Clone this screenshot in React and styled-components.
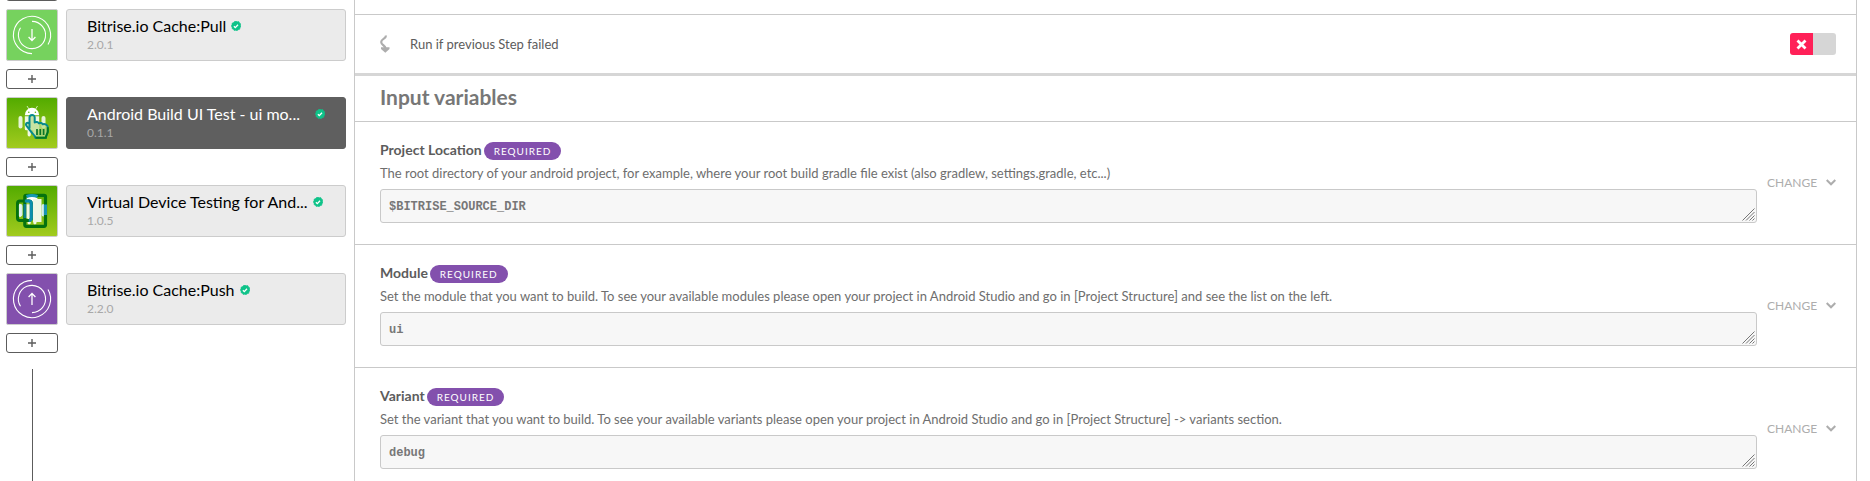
import { useState } from "react";
import styled, { createGlobalStyle } from "styled-components";

const GlobalStyle = createGlobalStyle`
  * {
    box-sizing: border-box;
  }
  body {
    margin: 0;
    background: #fff;
    color: #5c5c5c;
    font-family: Lato, "Liberation Sans", sans-serif;
    font-size: 13px;
  }
  button, textarea {
    font-family: inherit;
    margin: 0;
  }
`;

const Page = styled.div`
  display: flex;
  height: 100vh;
  overflow: hidden;
`;

/* workflow steps */

const Sidebar = styled.aside`
  flex: 0 0 354px;
  min-width: 0;
  display: flex;
  flex-direction: column;
  padding: 0 8px 0 6px;
`;

/* the list is scrolled, its first add button is almost out of view */
const StepList = styled.ol`
  list-style: none;
  margin: -19px 0 0;
  padding: 0;
  display: flex;
  flex-direction: column;
  gap: 8px;
`;

const StepItem = styled.li`
  display: flex;
  gap: 8px;
`;

const AddButton = styled.button`
  width: 52px;
  height: 20px;
  padding: 0;
  display: flex;
  justify-content: center;
  align-items: center;
  color: #5c5c5c;
  background: #fff;
  border: 1px solid #5c5c5c;
  border-radius: 3px;
  cursor: pointer;
`;

const StepIcon = styled.div`
  flex: none;
  width: 52px;
  height: 52px;
  border: 1px solid #ccc;
  border-radius: 2px;
  overflow: hidden;
  background: ${(props) => props.$bg};

  svg {
    display: block;
  }
`;

const StepCard = styled.button`
  flex: 1;
  min-width: 0;
  height: 52px;
  padding: 6px 20px;
  text-align: left;
  color: ${(props) => (props.$active ? "#fff" : "#000")};
  background: ${(props) => (props.$active ? "#5f5f5f" : "#ebebeb")};
  border: 1px solid ${(props) => (props.$active ? "#5f5f5f" : "#ccc")};
  border-radius: 3px;
  cursor: pointer;
`;

const StepTitle = styled.div`
  display: flex;
  align-items: center;
  justify-content: ${(props) => (props.$active ? "space-between" : "flex-start")};
  gap: 5px;
  font-size: 16px;
  line-height: 20px;

  svg {
    flex: none;
  }
`;

const StepName = styled.span`
  overflow: hidden;
  white-space: nowrap;
  text-overflow: ellipsis;
`;

const StepVersion = styled.div`
  font-size: 12px;
  line-height: 18px;
  color: #a8a8a8;
`;

const FlowLine = styled.div`
  flex: 1;
  width: 1px;
  margin: 16px 0 0 26px;
  background: #5c5c5c;
`;

/* step settings */

const Panel = styled.main`
  flex: 1;
  min-width: 0;
  margin-right: 13px;
  padding-top: 14px;
  border: solid #c9c9c9;
  border-width: 0 1px;
`;

const OptionRow = styled.div`
  display: flex;
  align-items: center;
  height: 62px;
  padding: 0 20px 0 25px;
  border-top: 1px solid #c9c9c9;
  border-bottom: 3px solid #d6d6d6;
`;

const OptionLabel = styled.label`
  flex: 1;
  margin-left: 20px;
`;

const Switch = styled.span`
  display: grid;
  grid-template-columns: 23px 23px;
  align-items: center;
  justify-items: center;

  svg {
    grid-row: 1;
    grid-column: ${(props) => (props.$on ? 2 : 1)};
    pointer-events: none;
    z-index: 1;
  }
`;

const SwitchInput = styled.input`
  appearance: none;
  grid-row: 1;
  grid-column: 1 / 3;
  width: 46px;
  height: 22px;
  margin: 0;
  border-radius: 3px;
  background: linear-gradient(to right, #ff2158 50%, #d6d6d6 50%);
  cursor: pointer;

  &:checked {
    background: linear-gradient(to right, #d6d6d6 50%, #0fc389 50%);
  }
`;

const SectionTitle = styled.h2`
  margin: 0;
  padding: 0 25px 3px;
  font-size: 21px;
  line-height: 42px;
  color: #777;
  border-bottom: 1px solid #c9c9c9;
`;

const Variable = styled.section`
  display: flex;
  align-items: center;
  gap: 10px;
  padding: 20px 20px 21px 25px;
  border-bottom: 1px solid #c9c9c9;
`;

const VariableBody = styled.div`
  flex: 1;
  min-width: 0;
`;

const VariableHead = styled.div`
  display: flex;
  align-items: flex-start;
  gap: 2px;
  height: 18px;
`;

const VariableLabel = styled.label`
  font-size: 14px;
  font-weight: 700;
  line-height: 16px;
`;

const Required = styled.span`
  padding: 0 10px;
  font-size: 10px;
  line-height: 18px;
  letter-spacing: 1px;
  color: #fff;
  background: #8350ad;
  border-radius: 9px;
`;

const Description = styled.p`
  margin: 3px 0 6px;
  line-height: 20px;
  color: #6e6e6e;
`;

const ValueBox = styled.div`
  position: relative;
  display: flex;

  svg {
    position: absolute;
    right: 2px;
    bottom: 2px;
    pointer-events: none;
  }
`;

const ValueInput = styled.textarea`
  flex: 1;
  height: 34px;
  padding: 9px 8px 7px;
  font-family: "Liberation Mono", monospace;
  font-size: 12px;
  font-weight: 700;
  line-height: 16px;
  color: #777;
  background: #f7f7f7;
  border: 1px solid #c9c9c9;
  border-radius: 3px;
  resize: none;
`;

const ChangeButton = styled.button`
  flex: 0 0 69px;
  display: flex;
  align-items: center;
  justify-content: space-between;
  padding: 0;
  font-size: 12px;
  line-height: 20px;
  color: #adadad;
  background: none;
  border: 0;
  cursor: pointer;
`;

const CacheIcon = ({ up }) => (
  <svg width="50" height="50" viewBox="1 1 50 50" fill="none" stroke="#fff">
    <g transform={up ? "matrix(1 0 0 -1 0 52)" : undefined}>
      <path d="M26 44.6A18.6 18.6 0 1 1 42 35.5" strokeWidth="1.1" />
      <path d="M26 12.4A13.6 13.6 0 1 1 14.5 18.7" strokeWidth="1.1" />
      <path d="M26 20v11.5M22.6 28l3.4 3.6 3.4-3.6" strokeWidth="1.3" />
    </g>
  </svg>
);

const Robot = ({ arms }) => (
  <>
    <path d="M21 9l2 3.2M31.5 9l-2 3.2" stroke="#d8efc4" strokeWidth="0.9" />
    <path d="M18.8 18.2a7.2 7.4 0 0 1 14.4 0z" fill="#fff" />
    <circle cx="22.8" cy="15.3" r="0.8" fill="#5fb012" />
    <circle cx="29.4" cy="15.3" r="0.8" fill="#5fb012" />
    <path
      d="M18.8 19.3h14.4v12.5a1.5 1.5 0 0 1-1.5 1.5h-1.2v4.5a1.6 1.6 0 0 1-3.2 0v-4.5h-2.5v4.5a1.6 1.6 0 0 1-3.2 0v-4.5h-1.3a1.5 1.5 0 0 1-1.5-1.5z"
      fill="#f0f8e2"
    />
    <rect x="12.5" y="19" width="4" height="12.5" rx="2" fill={arms} />
    <rect x="35.5" y="19" width="4" height="12.5" rx="2" fill={arms} />
  </>
);

const UiTestIcon = () => (
  <svg width="50" height="50" viewBox="1 1 50 50">
    <Robot arms="#e6f4d6" />
    <path
      d="M23.500 31V20.500a2.600 2.600 0 0 1 5.200 0v5c1.600-1 3.500-.6 4.200.8 1.500-.8 3.300-.3 3.900 1 2.300-.7 4.900.6 5 3v4c0 2.500-1.800 3.500-2 6.500H29.500c-.4-3-4-4.500-5.500-7.500l-3.800-4.800c-.8-2.500 1.800-3.700 3.300-1.500z"
      fill="#b9dc8c"
      fillOpacity="0.75"
      stroke="#088a8e"
      strokeWidth="2"
      strokeLinejoin="round"
    />
    <path d="M31 32v6M34.300 32v6M37.600 32v6" stroke="#0b7428" strokeWidth="1.7" />
    <path d="M41.800 30.300v4c0 2.500-1.800 3.500-2 6.500H29.500" fill="none" stroke="#067a1c" strokeWidth="2" />
  </svg>
);

const DeviceTestIcon = () => (
  <svg width="50" height="50" viewBox="1 1 50 50" fill="none">
    <Robot arms="#d2eef0" />
    <rect x="27" y="14" width="8.500" height="23" fill="#eff8e4" />
    <rect x="18.8" y="10.3" width="20.7" height="31" rx="1.5" stroke="#04720f" strokeWidth="3.2" />
    <path d="M20.5 11.500q5.500-2 11 0" stroke="#1899b4" strokeWidth="3" />
    <path d="M39.5 19.5V30" stroke="#1a94b4" strokeWidth="3" />
    <rect x="11.5" y="16" width="13.8" height="19.5" rx="2.5" stroke="#04720f" strokeWidth="3" />
    <path d="M18.8 16h4a2.500 2.500 0 0 1 2.500 2.500V33a2.500 2.500 0 0 1-2.500 2.500" stroke="#0b8fae" strokeWidth="3" />
    <path d="M18.8 19v14" stroke="#0b7f8d" strokeWidth="2.5" />
    <path d="M14 20v11" stroke="#e4f4ee" strokeWidth="2.2" strokeLinecap="round" />
  </svg>
);

const VerifiedIcon = () => (
  <svg width="10" height="10" viewBox="0 0 10 10">
    <path
      d="M5 0l1.300.7 1.500-.1.700 1.300 1.200.9-.2 1.500.5 1.300-1 1.200-.3 1.500-1.500.4L6 9.700l-1.300-.4-1.500.2-.8-1.200-1.400-.7.1-1.500L.2 4.900l.8-1.200.1-1.500 1.400-.6L3.500.5z"
      fill="#0fc389"
      stroke="#0fc389"
      strokeWidth="0.6"
    />
    <path d="M2.900 5.200l1.400 1.400 2.700-2.900" fill="none" stroke="#fff" strokeWidth="1.3" />
  </svg>
);

const PlusIcon = () => (
  <svg width="8" height="8" viewBox="0 0 8 8">
    <path d="M4 0v8M0 4h8" stroke="currentColor" strokeWidth="1.4" />
  </svg>
);

const RunIcon = () => (
  <svg width="10" height="18" viewBox="0 0 10 18" fill="none">
    <path d="M6 .5C6 4.200 1.200 3.500 1.200 7s4.300 3 4.300 6.500" stroke="#adadad" strokeWidth="2.2" />
    <path d="M1 12.200h8.500v1.800L5.300 17.700 1 14z" fill="#adadad" />
  </svg>
);

const CrossIcon = () => (
  <svg width="11" height="11" viewBox="0 0 11 11">
    <path d="M1.500 1.500l8 8M9.500 1.500l-8 8" stroke="#fff" strokeWidth="2.8" />
  </svg>
);

const ChevronIcon = () => (
  <svg width="10" height="7" viewBox="0 0 10 7" fill="none">
    <path d="M.7 1l4.300 4.300L9.300 1" stroke="currentColor" strokeWidth="2" />
  </svg>
);

const GripIcon = () => (
  <svg width="13" height="13" viewBox="0 0 13 13">
    <path d="M.5 12.500l12-12M4 12.500l8.500-8.500M7.500 12.500l5-5M10.500 12.500l2-2" stroke="#777" strokeWidth="1" />
  </svg>
);

const androidBg = "linear-gradient(#53ab00, #a2cb1e)";

const steps = [
  {
    id: 1,
    name: "Bitrise.io Cache:Pull",
    version: "2.0.1",
    bg: "#76d25e",
    icon: <CacheIcon />,
  },
  {
    id: 2,
    name: "Android Build UI Test - ui mo...",
    version: "0.1.1",
    bg: androidBg,
    icon: <UiTestIcon />,
  },
  {
    id: 3,
    name: "Virtual Device Testing for And...",
    version: "1.0.5",
    bg: androidBg,
    icon: <DeviceTestIcon />,
  },
  {
    id: 4,
    name: "Bitrise.io Cache:Push",
    version: "2.2.0",
    bg: "#8350ad",
    icon: <CacheIcon up />,
  },
];

const variables = [
  {
    id: "project_location",
    label: "Project Location",
    desc: "The root directory of your android project, for example, where your root build gradle file exist (also gradlew, settings.gradle, etc...)",
    value: "$BITRISE_SOURCE_DIR",
  },
  {
    id: "module",
    label: "Module",
    desc: "Set the module that you want to build. To see your available modules please open your project in Android Studio and go in [Project Structure] and see the list on the left.",
    value: "ui",
  },
  {
    id: "variant",
    label: "Variant",
    desc: "Set the variant that you want to build. To see your available variants please open your project in Android Studio and go in [Project Structure] -> variants section.",
    value: "debug",
  },
];

const AddStep = () => (
  <li>
    <AddButton type="button" aria-label="Add step">
      <PlusIcon />
    </AddButton>
  </li>
);

const Step = ({ step, active, onSelect }) => (
  <>
    <StepItem>
      <StepIcon $bg={step.bg}>{step.icon}</StepIcon>
      <StepCard type="button" $active={active} onClick={onSelect}>
        <StepTitle $active={active}>
          <StepName>{step.name}</StepName>
          <VerifiedIcon />
        </StepTitle>
        <StepVersion>{step.version}</StepVersion>
      </StepCard>
    </StepItem>
    <AddStep />
  </>
);

const VariableRow = ({ variable }) => (
  <Variable>
    <VariableBody>
      <VariableHead>
        <VariableLabel htmlFor={variable.id}>{variable.label}</VariableLabel>
        <Required>REQUIRED</Required>
      </VariableHead>
      <Description>{variable.desc}</Description>
      <ValueBox>
        <ValueInput id={variable.id} rows={1} spellCheck={false} defaultValue={variable.value} />
        <GripIcon />
      </ValueBox>
    </VariableBody>
    <ChangeButton type="button">
      CHANGE
      <ChevronIcon />
    </ChangeButton>
  </Variable>
);

export default function App() {
  const [selected, setSelected] = useState(2);
  const [runIfFailed, setRunIfFailed] = useState(false);

  return (
    <>
      <GlobalStyle />
      <Page>
        <Sidebar>
          <StepList>
            <AddStep />
            {steps.map((step) => (
              <Step
                key={step.id}
                step={step}
                active={step.id === selected}
                onSelect={() => setSelected(step.id)}
              />
            ))}
          </StepList>
          <FlowLine />
        </Sidebar>

        <Panel>
          <OptionRow>
            <RunIcon />
            <OptionLabel htmlFor="run_if_failed">Run if previous Step failed</OptionLabel>
            <Switch $on={runIfFailed}>
              <SwitchInput
                id="run_if_failed"
                type="checkbox"
                checked={runIfFailed}
                onChange={(e) => setRunIfFailed(e.target.checked)}
              />
              <CrossIcon />
            </Switch>
          </OptionRow>
          <SectionTitle>Input variables</SectionTitle>
          {variables.map((variable) => (
            <VariableRow key={variable.id} variable={variable} />
          ))}
        </Panel>
      </Page>
    </>
  );
}
